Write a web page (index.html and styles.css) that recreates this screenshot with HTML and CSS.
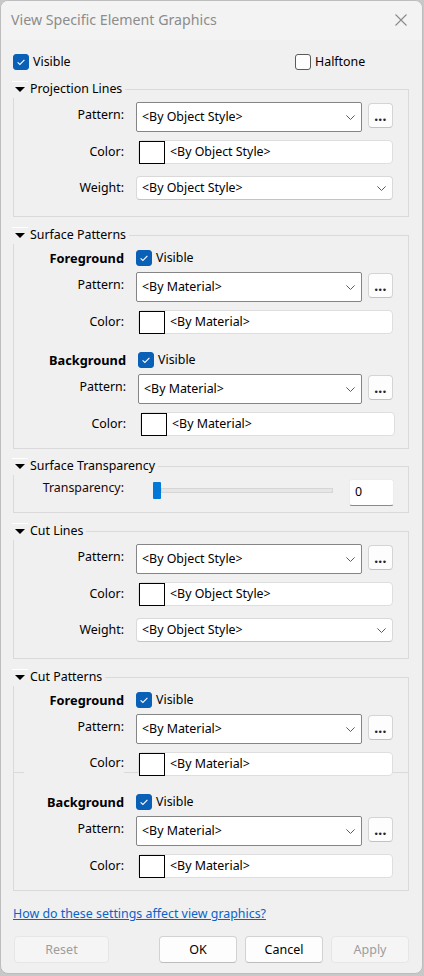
FILE: index.html
```html
<!DOCTYPE html>
<html>
<head>
<meta charset="utf-8">
<title>View Specific Element Graphics</title>
<link rel="stylesheet" href="styles.css">
</head>
<body>
<div class="win">
  <div class="titlebar">
    <span class="title">View Specific Element Graphics</span>
    <svg class="close" width="12" height="12" viewBox="0 0 12 12"><path d="M0.5 0.5L11.5 11.5M11.5 0.5L0.5 11.5" stroke="#8a8a8a" stroke-width="1.1" fill="none"/></svg>
  </div>
  <div class="content">
    <div class="toprow">
      <div class="chk"><span class="box on"><svg width="16" height="16" viewBox="0 0 16 16"><path d="M4.6 8.3L6.9 10.5L11.4 5.9" fill="none" stroke="#fff" stroke-width="1.1"/></svg></span><span class="chk-text">Visible</span></div>
      <div class="chk"><span class="box"></span><span class="chk-text">Halftone</span></div>
    </div>

    <section class="group g1">
      <div class="ghead"><span class="tw"><span class="tri"></span></span><span class="gtitle">Projection Lines</span><span class="rule"></span></div>
      <div class="gbody lines">
        <div class="row r30"><span class="lbl up">Pattern:</span><div class="select pat"><span class="val">&lt;By Object Style&gt;</span><svg class="chev" width="9" height="5" viewBox="0 0 9 5"><path d="M0.4 0.4L4.5 4.5L8.6 0.4" fill="none" stroke="#5c5c5c"/></svg></div><span class="dots">...</span></div>
        <div class="row r24 gap8"><span class="lbl">Color:</span><div class="color"><span class="sw"></span><span class="val">&lt;By Object Style&gt;</span></div></div>
        <div class="row r24 gap12"><span class="lbl">Weight:</span><div class="select wide"><span class="val">&lt;By Object Style&gt;</span><svg class="chev" width="9" height="5" viewBox="0 0 9 5"><path d="M0.4 0.4L4.5 4.5L8.6 0.4" fill="none" stroke="#5c5c5c"/></svg></div></div>
      </div>
    </section>

    <section class="group">
      <div class="ghead"><span class="tw"><span class="tri"></span></span><span class="gtitle">Surface Patterns</span><span class="rule"></span></div>
      <div class="gbody pats">
        <div class="row r16"><span class="lbl bold">Foreground</span><div class="chk"><span class="box on"><svg width="16" height="16" viewBox="0 0 16 16"><path d="M4.6 8.3L6.9 10.5L11.4 5.9" fill="none" stroke="#fff" stroke-width="1.1"/></svg></span><span class="chk-text">Visible</span></div></div>
        <div class="row r30 gap6"><span class="lbl up">Pattern:</span><div class="select pat"><span class="val">&lt;By Material&gt;</span><svg class="chev" width="9" height="5" viewBox="0 0 9 5"><path d="M0.4 0.4L4.5 4.5L8.6 0.4" fill="none" stroke="#5c5c5c"/></svg></div><span class="dots">...</span></div>
        <div class="row r24 gap8"><span class="lbl">Color:</span><div class="color"><span class="sw"></span><span class="val">&lt;By Material&gt;</span></div></div>
        <div class="row r16 gap18 shift"><span class="lbl bold">Background</span><div class="chk"><span class="box on"><svg width="16" height="16" viewBox="0 0 16 16"><path d="M4.6 8.3L6.9 10.5L11.4 5.9" fill="none" stroke="#fff" stroke-width="1.1"/></svg></span><span class="chk-text">Visible</span></div></div>
        <div class="row r30 gap6 shift"><span class="lbl up">Pattern:</span><div class="select pat"><span class="val">&lt;By Material&gt;</span><svg class="chev" width="9" height="5" viewBox="0 0 9 5"><path d="M0.4 0.4L4.5 4.5L8.6 0.4" fill="none" stroke="#5c5c5c"/></svg></div><span class="dots">...</span></div>
        <div class="row r24 gap8 shift"><span class="lbl">Color:</span><div class="color"><span class="sw"></span><span class="val">&lt;By Material&gt;</span></div></div>
      </div>
    </section>

    <section class="group g3">
      <div class="ghead"><span class="tw"><span class="tri"></span></span><span class="gtitle">Surface Transparency</span><span class="rule"></span></div>
      <div class="gbody trans">
        <div class="row rt"><span class="lbl dark">Transparency:</span>
          <div class="slider"><span class="thumb"></span><span class="track"></span></div>
          <div class="num">0</div>
        </div>
      </div>
    </section>

    <section class="group">
      <div class="ghead"><span class="tw"><span class="tri"></span></span><span class="gtitle">Cut Lines</span><span class="rule"></span></div>
      <div class="gbody lines">
        <div class="row r30"><span class="lbl up">Pattern:</span><div class="select pat"><span class="val">&lt;By Object Style&gt;</span><svg class="chev" width="9" height="5" viewBox="0 0 9 5"><path d="M0.4 0.4L4.5 4.5L8.6 0.4" fill="none" stroke="#5c5c5c"/></svg></div><span class="dots">...</span></div>
        <div class="row r24 gap8"><span class="lbl">Color:</span><div class="color"><span class="sw"></span><span class="val">&lt;By Object Style&gt;</span></div></div>
        <div class="row r24 gap12"><span class="lbl">Weight:</span><div class="select wide"><span class="val">&lt;By Object Style&gt;</span><svg class="chev" width="9" height="5" viewBox="0 0 9 5"><path d="M0.4 0.4L4.5 4.5L8.6 0.4" fill="none" stroke="#5c5c5c"/></svg></div></div>
      </div>
    </section>

    <section class="group">
      <div class="ghead"><span class="tw"><span class="tri"></span></span><span class="gtitle">Cut Patterns</span><span class="rule"></span></div>
      <div class="gbody pats cutpats">
        <span class="ghost"></span>
        <div class="row r16"><span class="lbl bold">Foreground</span><div class="chk"><span class="box on"><svg width="16" height="16" viewBox="0 0 16 16"><path d="M4.6 8.3L6.9 10.5L11.4 5.9" fill="none" stroke="#fff" stroke-width="1.1"/></svg></span><span class="chk-text">Visible</span></div></div>
        <div class="row r30 gap6"><span class="lbl up">Pattern:</span><div class="select pat"><span class="val">&lt;By Material&gt;</span><svg class="chev" width="9" height="5" viewBox="0 0 9 5"><path d="M0.4 0.4L4.5 4.5L8.6 0.4" fill="none" stroke="#5c5c5c"/></svg></div><span class="dots">...</span></div>
        <div class="row r24 gap8"><span class="lbl masked">Color:</span><div class="color"><span class="sw"></span><span class="val">&lt;By Material&gt;</span></div></div>
        <div class="row r16 gap18"><span class="lbl bold">Background</span><div class="chk"><span class="box on"><svg width="16" height="16" viewBox="0 0 16 16"><path d="M4.6 8.3L6.9 10.5L11.4 5.9" fill="none" stroke="#fff" stroke-width="1.1"/></svg></span><span class="chk-text">Visible</span></div></div>
        <div class="row r30 gap6"><span class="lbl up">Pattern:</span><div class="select pat"><span class="val">&lt;By Material&gt;</span><svg class="chev" width="9" height="5" viewBox="0 0 9 5"><path d="M0.4 0.4L4.5 4.5L8.6 0.4" fill="none" stroke="#5c5c5c"/></svg></div><span class="dots">...</span></div>
        <div class="row r24 gap8"><span class="lbl">Color:</span><div class="color"><span class="sw"></span><span class="val">&lt;By Material&gt;</span></div></div>
      </div>
    </section>

    <a class="link" href="#">How do these settings affect view graphics?</a>

    <div class="buttons">
      <span class="btn reset disabled">Reset</span>
      <span class="btn ok">OK</span>
      <span class="btn">Cancel</span>
      <span class="btn disabled">Apply</span>
    </div>
  </div>
</div>
</body>
</html>
```

FILE: styles.css
```css
* { box-sizing: border-box; margin: 0; padding: 0; }
html, body { width: 424px; height: 976px; overflow: hidden; }
body {
  background: #c8c8c8;
  font-family: "Noto Sans", "Liberation Sans", sans-serif;
  font-size: 12.4px;
  color: #000;
}
.win {
  width: 423px;
  height: 974px;
  background: #f0f0f0;
  border: 1px solid #bdbdbd;
  border-radius: 8px;
  overflow: hidden;
  display: flex;
  flex-direction: column;
}
.titlebar {
  height: 39px;
  flex: none;
  background: #f3f3f3;
  display: flex;
  align-items: center;
  justify-content: space-between;
  padding: 0 15px 2px 10px;
}
.title { font-size: 14.2px; color: #8c8c8c; line-height: 20px; }
.close { display: block; }

.content { padding: 14px 0 0 12px; display: flex; flex-direction: column; }

.toprow { display: grid; grid-template-columns: 282px auto; height: 16px; }
.chk { display: flex; align-items: center; height: 16px; }
.box {
  width: 16px; height: 16px; flex: none;
  border: 1px solid #5a5a5a; border-radius: 3px; background: #fdfdfd;
  display: block;
}
.box.on { background: #0a5fb6; border-color: #0a5fb6; }
.box svg { display: block; margin: -1px; }
.chk-text { margin-left: 4px; line-height: 16px; }

.group { width: 396px; margin-top: 9px; }
.g1 { margin-top: 10px; }
.g3 { margin-top: 8px; }
.ghead { display: flex; height: 18px; }
.tw {
  width: 16px; height: 16px; margin-left: -1px; margin-top: 1px;
  border-top: 1px solid #ffffff;
  display: flex; align-items: center; justify-content: center;
}
.tri {
  width: 0; height: 0;
  border-left: 5px solid transparent;
  border-right: 5px solid transparent;
  border-top: 5px solid #000;
  margin-top: -1px;
}
.gtitle { margin-left: 2px; line-height: 18px; white-space: nowrap; }
.rule {
  flex: 1;
  margin-top: 9px;
  margin-left: 3px;
  border-top: 1px solid #dadada;
  border-right: 1px solid #dadada;
}
.gbody {
  border: 1px solid #dadada;
  border-top: none;
  display: flex;
  flex-direction: column;
  position: relative;
}
.lines { padding: 4px 0 16px; }
.pats { padding: 6px 0 12px; }
.trans { padding: 4px 0 6px; }

.row { display: flex; align-items: center; }
.r30 { height: 30px; }
.r24 { height: 24px; }
.r16 { height: 16px; }
.gap6 { margin-top: 6px; }
.gap8 { margin-top: 8px; }
.gap12 { margin-top: 12px; }
.gap18 { margin-top: 18px; }

.lbl {
  width: 110px; flex: none; margin-right: 12px;
  text-align: right; line-height: 16px; white-space: nowrap;
}
.lbl.up { margin-top: -5px; }
.lbl.bold { font-weight: bold; font-size: 12.8px; }
.lbl.dark { color: #1c0606; }
.lbl.masked {
  position: relative; z-index: 1;
  margin-left: 10px; width: 100px;
  align-self: stretch; line-height: 22px;
  background: #f0f0f0;
}
.shift .lbl { width: 112px; }

.select {
  height: 100%;
  background: #fff;
  display: flex; align-items: center; justify-content: space-between;
  padding: 0 6px 0 5px;
}
.select.pat {
  width: 226px;
  border: 1px solid #858585;
  border-radius: 2px;
}
.shift .select.pat { width: 224px; }
.select.wide {
  width: 257px;
  border: 1px solid #d9d9d9;
  border-bottom-color: #c4c4c4;
  border-radius: 4px;
}
.val { white-space: nowrap; line-height: 16px; }
.chev { display: block; flex: none; }

.dots {
  width: 25px; height: 25px; margin-left: 6px; align-self: flex-start; margin-top: 1px;
  background: #fdfdfd;
  border: 1px solid #d4d4d4; border-bottom-color: #c2c2c2;
  border-radius: 4px;
  font-weight: bold; font-size: 14px; color: #2a2320;
  text-align: center; line-height: 24px; letter-spacing: 0.3px;
}

.color {
  position: relative; z-index: 1;
  width: 255px; height: 24px; margin-left: 2px;
  background: #fff;
  border: 1px solid #dedede;
  border-radius: 4px;
  display: flex; align-items: center;
}
.sw {
  width: 26px; height: 23px; flex: none;
  border: 1px solid #000;
  background: #fff;
}
.color .val { margin-left: 5px; }

.ghost {
  position: absolute; left: 0; right: 0; top: 86px; height: 1px;
  background: #dadada;
}

.rt { height: 27px; align-items: flex-start; }
.rt .lbl { line-height: 16px; margin-top: 1px; }
.slider {
  width: 180px; margin-left: 17px; margin-top: 3px; height: 17px;
  display: flex; align-items: center;
}
.thumb { width: 8px; height: 17px; background: #0078d7; border-radius: 1px; flex: none; }
.track {
  flex: 1; height: 5px;
  background: #e6e6e6; border: 1px solid #d6d6d6;
}
.num {
  width: 45px; height: 27px; margin-left: 16px;
  background: #fff;
  border: 1px solid #ececec; border-bottom: 1px solid #8a8a8a;
  border-radius: 3px;
  padding: 3px 0 0 5px; line-height: 18px;
}

.link {
  margin-top: 15px;
  color: #0a63c9;
  text-decoration: underline;
  line-height: 16px;
  align-self: flex-start;
}

.buttons { display: flex; margin-top: 14px; padding-left: 1px; }
.btn {
  width: 78px; height: 27px;
  background: #fdfdfd;
  border: 1px solid #d2d2d2; border-bottom-color: #bdbdbd;
  border-radius: 4px;
  display: flex; align-items: center; justify-content: center;
  font-size: 12.5px;
  margin-left: 8px;
}
.btn.reset { width: 95px; margin-left: 0; }
.btn.ok { margin-left: 50px; }
.btn.disabled {
  background: #f5f5f5;
  border-color: #e6e6e6;
  color: #9d9d9d;
}
```
